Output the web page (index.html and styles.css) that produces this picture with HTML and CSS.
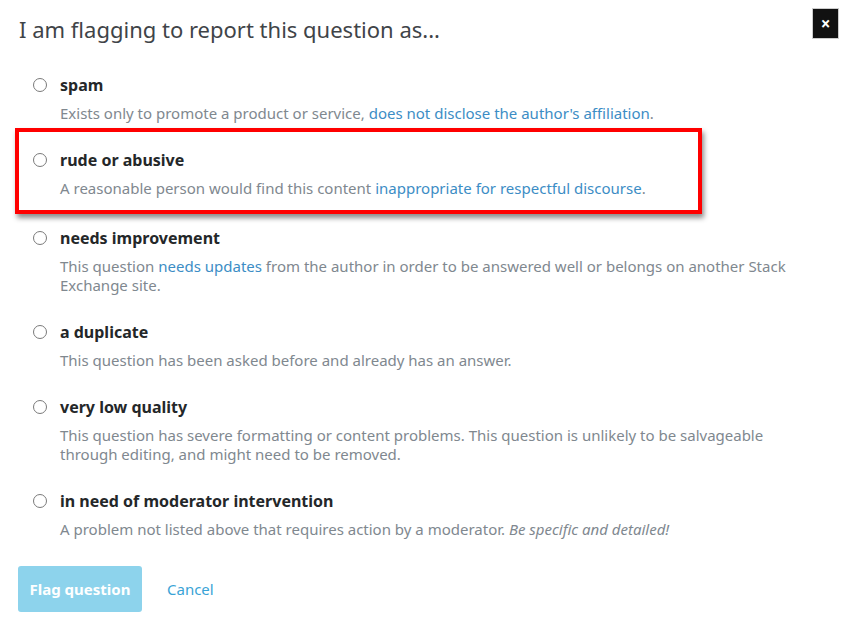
FILE: index.html
```html
<!DOCTYPE html>
<html lang="en">
<head>
    <meta charset="UTF-8">
    <title>Flag question</title>
    <link rel="stylesheet" href="styles.css">
</head>
<body>
    <div class="flag-dialog">
        <div class="dialog-header">
            <h1 class="dialog-title">I am flagging to report this question as...</h1>
            <button class="close-btn" type="button">&times;</button>
        </div>

        <ul class="flag-options">
            <li class="flag-option">
                <label class="option-label"><span class="radio"></span>spam</label>
                <div class="option-desc">Exists only to promote a product or service, <a href="#">does not disclose the author's affiliation</a>.</div>
            </li>
            <li class="flag-option highlighted">
                <label class="option-label"><span class="radio"></span>rude or abusive</label>
                <div class="option-desc">A reasonable person would find this content <a href="#">inappropriate for respectful discourse</a>.</div>
            </li>
            <li class="flag-option">
                <label class="option-label"><span class="radio"></span>needs improvement</label>
                <div class="option-desc">This question <a href="#">needs updates</a> from the author in order to be answered well or belongs on another Stack Exchange site.</div>
            </li>
            <li class="flag-option">
                <label class="option-label"><span class="radio"></span>a duplicate</label>
                <div class="option-desc">This question has been asked before and already has an answer.</div>
            </li>
            <li class="flag-option">
                <label class="option-label"><span class="radio"></span>very low quality</label>
                <div class="option-desc">This question has severe formatting or content problems. This question is unlikely to be salvageable through editing, and might need to be removed.</div>
            </li>
            <li class="flag-option">
                <label class="option-label"><span class="radio"></span>in need of moderator intervention</label>
                <div class="option-desc">A problem not listed above that requires action by a moderator. <em>Be specific and detailed!</em></div>
            </li>
        </ul>

        <div class="dialog-actions">
            <button class="flag-btn" type="button">Flag question</button>
            <a class="cancel-link" href="#">Cancel</a>
        </div>
    </div>
</body>
</html>
```

FILE: styles.css
```css
* {
    margin: 0;
    padding: 0;
    box-sizing: border-box;
    font-family: 'Noto Sans', 'Open Sans', sans-serif;
}

body {
    background: #fff;
    color: #242729;
}

.flag-dialog {
    width: 858px;
    padding: 8px 18px 0 18px;
}

.dialog-header {
    display: flex;
    justify-content: space-between;
    align-items: flex-start;
    height: 67px;
}

.dialog-title {
    font-size: 22px;
    font-weight: normal;
    color: #3f4448;
    line-height: 30px;
    margin-top: 6px;
    margin-left: 1px;
}

.close-btn {
    width: 27px;
    height: 31px;
    background: #111;
    color: #fff;
    border: 1px solid #ccc;
    font-size: 17px;
    font-weight: bold;
    line-height: 28px;
    margin-right: 1px;
}

.flag-options {
    list-style: none;
}

.flag-option {
    padding-left: 15px;
    margin-bottom: 27px;
}

.flag-option.highlighted {
    position: relative;
    margin-bottom: 30px;
}

/* red annotation frame drawn on top of the option */
.flag-option.highlighted::after {
    content: '';
    position: absolute;
    left: -3px;
    right: 138px;
    top: -22px;
    bottom: -16px;
    border: 4px solid #f00;
    box-shadow: 2px 4px 5px rgba(0, 0, 0, 0.45);
}

.option-label {
    display: flex;
    align-items: center;
    font-size: 16px;
    font-weight: bold;
    line-height: 20px;
    color: #242729;
}

.radio {
    width: 14px;
    height: 14px;
    border: 1px solid #7a7a7a;
    border-radius: 50%;
    margin-right: 13px;
    margin-top: -1px;
}

.option-desc {
    margin-top: 9px;
    padding-left: 27px;
    padding-right: 20px;
    font-size: 15px;
    line-height: 19px;
    color: #80888f;
}

.option-desc a {
    color: #3c8dc5;
    text-decoration: none;
}

.option-desc em {
    font-style: italic;
}

.dialog-actions {
    display: flex;
    align-items: center;
    gap: 25px;
}

.flag-btn {
    width: 124px;
    height: 46px;
    background: #8dd3ec;
    color: #fff;
    border: none;
    border-radius: 3px;
    font-size: 15px;
    font-weight: bold;
}

.cancel-link {
    color: #3aa3d6;
    font-size: 15px;
    text-decoration: none;
}
```
